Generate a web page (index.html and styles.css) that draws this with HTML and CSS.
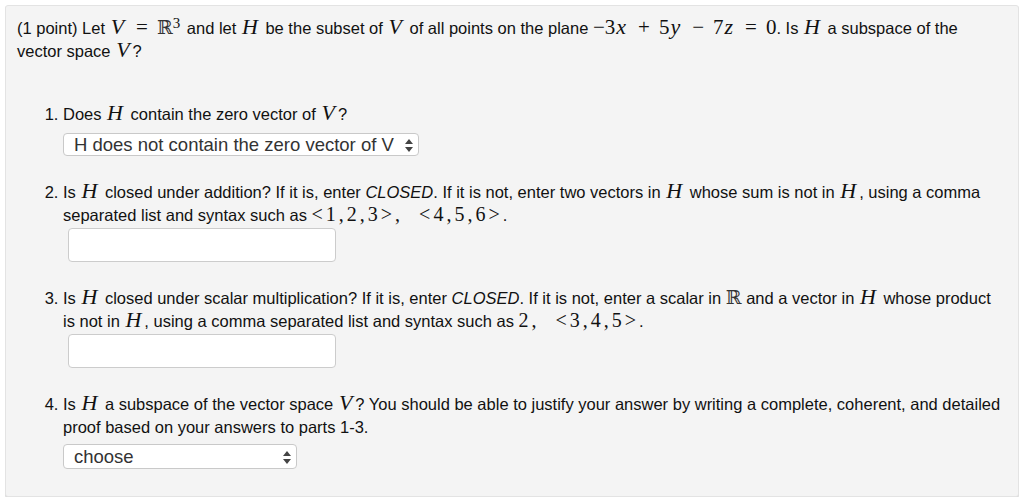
FILE: index.html
```html
<!DOCTYPE html>
<html lang="en">
<head>
    <meta charset="UTF-8">
    <title>Subspace problem</title>
    <link rel="stylesheet" href="styles.css">
</head>
<body>
    <div class="problem">
        <p class="intro">(1 point) Let <span class="m">V</span><span class="op">=</span><span class="bb">ℝ</span><sup class="sup">3</sup> and let <span class="m">H</span> be the subset of <span class="m">V</span> of all points on the plane <span class="num">−3</span><span class="m">x</span><span class="op">+</span><span class="num">5</span><span class="m">y</span><span class="op">−</span><span class="num">7</span><span class="m">z</span><span class="op">=</span><span class="num">0</span>. Is <span class="m">H</span> a subspace of the vector space <span class="m">V</span>?</p>

        <ol class="parts">
            <li>
                <p>Does <span class="m">H</span> contain the zero vector of <span class="m">V</span>?</p>
                <div class="pick pick-wide">
                    <span class="pick-text">H does not contain the zero vector of V</span>
                    <svg class="arrows" width="8" height="13" viewBox="0 0 8 13"><path d="M4 0 L8 5 L0 5 Z M0 8 L8 8 L4 13 Z" fill="#444"/></svg>
                </div>
            </li>
            <li>
                <p>Is <span class="m">H</span> closed under addition? If it is, enter <i>CLOSED</i>. If it is not, enter two vectors in <span class="m">H</span> whose sum is not in <span class="m">H</span>, using a comma separated list and syntax such as <span class="vec">&lt;1,2,3&gt;,&nbsp;&nbsp;&lt;4,5,6&gt;</span>.</p>
                <input class="answer" type="text">
            </li>
            <li>
                <p>Is <span class="m">H</span> closed under scalar multiplication? If it is, enter <i>CLOSED</i>. If it is not, enter a scalar in <span class="bb">ℝ</span> and a vector in <span class="m">H</span> whose product is not in <span class="m">H</span>, using a comma separated list and syntax such as <span class="vec">2,&nbsp;&nbsp;&lt;3,4,5&gt;</span>.</p>
                <input class="answer" type="text">
            </li>
            <li>
                <p>Is <span class="m">H</span> a subspace of the vector space <span class="m">V</span>? You should be able to justify your answer by writing a complete, coherent, and detailed proof based on your answers to parts 1-3.</p>
                <div class="pick pick-short">
                    <span class="pick-text">choose</span>
                    <svg class="arrows" width="8" height="13" viewBox="0 0 8 13"><path d="M4 0 L8 5 L0 5 Z M0 8 L8 8 L4 13 Z" fill="#444"/></svg>
                </div>
            </li>
        </ol>
    </div>
</body>
</html>
```

FILE: styles.css
```css
body {
    margin: 5px;
    font-family: "Liberation Sans", Arial, sans-serif;
    font-size: 16.5px;
    line-height: 23px;
    color: #111;
    background: #fff;
}

p {
    margin: 0;
}

.problem {
    width: 990px;
    background-color: #f4f4f4;
    border: 1px solid #e3e3e3;
    border-radius: 3px;
    box-shadow: 0 1px 1px rgba(0, 0, 0, 0.18);
    padding: 11px 11px 27px 11px;
}

/* math bits must not stretch the 23px lines */
.m, .num, .op, .bb, .sup, .vec {
    line-height: 0;
}

.m {
    font-family: "Liberation Serif", serif;
    font-style: italic;
    font-size: 22px;
    padding: 0 3px 0 1px;
}

.num {
    font-family: "Liberation Serif", serif;
    font-size: 21px;
}

.op {
    font-family: "Liberation Serif", serif;
    font-size: 21px;
    margin: 0 9px;
}

.bb {
    font-family: "DejaVu Serif", serif;
    font-size: 19px;
    color: #333;
}

.sup {
    font-family: "Liberation Serif", serif;
    font-size: 15px;
    margin-right: 2px;
}

.vec {
    font-family: "Liberation Serif", serif;
    font-size: 20px;
    letter-spacing: 3px;
}

.parts {
    margin: 40px 0 0 0;
    padding-left: 46px;
}

.parts li {
    margin-bottom: 25px;
}

.parts li:last-child {
    margin-bottom: 0;
}

.pick {
    position: relative;
    margin-top: 7px;
    height: 21px;
    border: 1px solid #c9c9c9;
    border-radius: 4px;
    background: #fff;
    font-size: 18.5px;
    line-height: 21px;
    color: #333;
    padding-left: 10px;
}

.pick-wide {
    width: 344px;
}

.pick-short {
    width: 222px;
    height: 23px;
    line-height: 23px;
    margin-top: 5px;
}

.arrows {
    position: absolute;
    right: 5px;
    top: 50%;
    margin-top: -6px;
}

.answer {
    display: block;
    margin: 1px 0 0 5px;
    width: 268px;
    height: 34px;
    box-sizing: border-box;
    border: 1px solid #ccc;
    border-radius: 4px;
    background: #fff;
}
```
